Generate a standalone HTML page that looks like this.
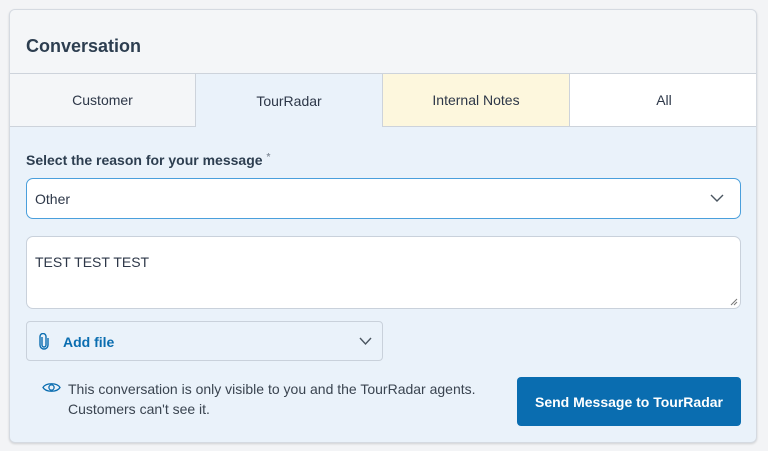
<!DOCTYPE html>
<html><head><style>
*{box-sizing:border-box;margin:0;padding:0}
body{width:768px;height:451px;background:#f3f4f6;font-family:"Liberation Sans",Arial,sans-serif;color:#2d3748;position:relative;overflow:hidden}
.card{position:absolute;left:9px;top:9px;width:748px;height:434px;border:1px solid #d5dae1;border-radius:6px;background:#eaf2fa;overflow:hidden;box-shadow:0 1px 2px rgba(0,0,0,.15)}
.head{height:64px;background:#f4f6f8;padding:26px 16px 0;font-weight:bold;font-size:18px;color:#2d3e50}
.tabs{position:absolute;top:63px;left:0;width:748px;height:54px;display:flex;border-top:1px solid #cdd3db}
.tab{height:53px;display:flex;align-items:center;justify-content:center;font-size:14px;color:#2d3748;border-bottom:1px solid #cdd3db}
.t1{width:186px;background:#f4f6f8;border-right:1px solid #cdd3db}
.t2{width:187px;background:#eaf2fa;border-bottom:none;border-right:1px solid #cdd3db}
.t3{width:187px;background:#fdf7dd;border-right:1px solid #cdd3db}
.t4{flex:1;background:#fff}
.abs{position:absolute}
.lbl{left:16px;top:142px;font-size:14px;font-weight:bold;color:#2d3e50}
.lbl span{color:#8a94a0;font-size:10px;vertical-align:top}
.sel{left:16px;top:168px;width:715px;height:41px;background:#fff;border:1px solid #4a9fdc;border-radius:7px;font-size:14px;padding:12px 8px}
.ta{left:16px;top:226px;width:715px;height:73px;background:#fff;border:1px solid #c9d1db;border-radius:7px;font-size:14px;padding:17px 8px}
.af{left:16px;top:311px;width:357px;height:40px;border:1px solid #c9d1db;border-radius:4px;color:#0a6db0;font-weight:bold;font-size:14px;padding:12px 0 0 36px}
.info{left:58px;top:369px;font-size:14px;line-height:20px;color:#3a4450}
.btn{left:507px;top:367px;width:224px;height:49px;background:#0a6db0;border-radius:4px;color:#fff;font-weight:bold;font-size:14px;display:flex;align-items:center;justify-content:center}
</style></head><body>
<div class="card">
<div class="head">Conversation</div>
<div class="tabs"><div class="tab t1">Customer</div><div class="tab t2">TourRadar</div><div class="tab t3">Internal Notes</div><div class="tab t4">All</div></div>
<div class="abs lbl">Select the reason for your message <span>*</span></div>
<div class="abs sel">Other<svg class="abs" style="right:16px;top:15px" width="14" height="9" viewBox="0 0 14 9"><path d="M1 1l6 6 6-6" fill="none" stroke="#4a5560" stroke-width="1.4"/></svg></div>
<div class="abs ta">TEST TEST TEST<svg class="abs" style="right:2px;bottom:2px" width="8" height="8"><path d="M7 1L1 7M7 4L4 7" stroke="#777" stroke-width="1"/></svg></div>
<div class="abs af"><svg class="abs" style="left:12px;top:11px" width="10" height="17" viewBox="0 0 10 17"><path d="M3 4v8a2 2 0 0 0 4 0V3.5a3 3 0 0 0-6 0V12a4 4 0 0 0 8 0V5" fill="none" stroke="#0a6db0" stroke-width="1.4"/></svg>Add file<svg class="abs" style="right:10px;top:15px" width="13" height="9" viewBox="0 0 13 9"><path d="M1 1l5.5 6 5.5-6" fill="none" stroke="#4a5560" stroke-width="1.4"/></svg></div>
<svg class="abs" style="left:32px;top:371px" width="19" height="13" viewBox="0 0 19 13"><path d="M1 6.5C4 1.5 15 1.5 18 6.5 15 11.5 4 11.5 1 6.5z" fill="none" stroke="#0a6db0" stroke-width="1.3"/><circle cx="9.5" cy="6.5" r="2.6" fill="none" stroke="#0a6db0" stroke-width="1.3"/></svg>
<div class="abs info">This conversation is only visible to you and the TourRadar agents.<br>Customers can't see it.</div>
<div class="abs btn">Send Message to TourRadar</div>
</div>
</body></html>
